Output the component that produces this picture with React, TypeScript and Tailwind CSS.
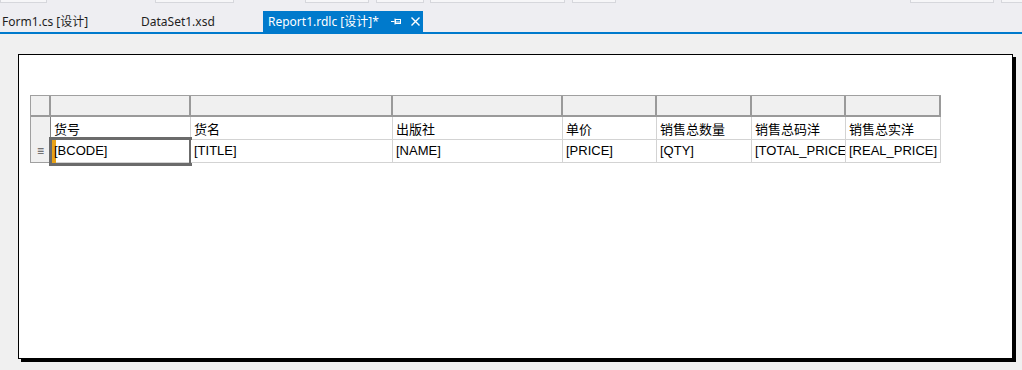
import React from "react";

const cols = [
  { w: 140, head: "货号", field: "[BCODE]" },
  { w: 202, head: "货名", field: "[TITLE]" },
  { w: 170, head: "出版社", field: "[NAME]" },
  { w: 94, head: "单价", field: "[PRICE]" },
  { w: 95, head: "销售总数量", field: "[QTY]" },
  { w: 94, head: "销售总码洋", field: "[TOTAL_PRICE]" },
  { w: 95, head: "销售总实洋", field: "[REAL_PRICE]" },
];

const toolbarBoxes = [
  { ml: 0, w: 47 },
  { ml: 108, w: 79 },
  { ml: 71, w: 64 },
  { ml: 7, w: 48 },
  { ml: 6, w: 135 },
  { ml: 7, w: 44 },
  { ml: 294, w: 84 },
  { ml: 7, w: 40 },
];

function PinIcon() {
  return (
    <svg width="10" height="7" viewBox="0 0 10 7" className="block">
      <path d="M0 3.5H3.5" stroke="white" strokeWidth="1" />
      <rect x="3.5" y="0.5" width="1" height="6" fill="white" />
      <rect x="4.5" y="1.5" width="5" height="4" fill="none" stroke="white" strokeWidth="1" />
      <rect x="4.5" y="3.5" width="5" height="1" fill="white" />
    </svg>
  );
}

function CloseIcon() {
  return (
    <svg width="9" height="9" viewBox="0 0 9 9" className="block">
      <path d="M0.5 0.5L8.5 8.5M8.5 0.5L0.5 8.5" stroke="white" strokeWidth="1.4" />
    </svg>
  );
}

function TabBar() {
  const font = { fontFamily: '"Noto Sans", "Noto Sans CJK SC", sans-serif' };
  return (
    <div className="bg-[#eeeef2]">
      <div className="flex h-[3px]">
        {toolbarBoxes.map((b, i) => (
          <div
            key={i}
            className="shrink-0 bg-[#f6f6f8] border-x border-b border-[#d6d7dc]"
            style={{ marginLeft: b.ml, width: b.w }}
          />
        ))}
      </div>
      <div className="flex items-end h-[29px] text-[12px] leading-none" style={font}>
        <div className="w-[135px] h-[21px] flex items-center pl-[2px] text-[#1e1e1e]">
          Form1.cs [设计]
        </div>
        <div className="w-[128px] h-[21px] flex items-center pl-[6px] text-[#1e1e1e]">
          DataSet1.xsd
        </div>
        <div className="w-[160px] h-[21px] flex items-center pl-[5px] bg-[#007acc] text-white">
          <span>Report1.rdlc [设计]*</span>
          <span className="ml-[12px]">
            <PinIcon />
          </span>
          <span className="ml-[10px]">
            <CloseIcon />
          </span>
        </div>
      </div>
      <div className="h-[2px] bg-[#007acc]" />
    </div>
  );
}

function Table() {
  const font = { fontFamily: '"Liberation Sans", "Noto Sans CJK SC", sans-serif' };
  return (
    <div className="ml-[11px] mt-[40px] w-fit text-[13px] leading-[15px] text-black" style={font}>
      {/* column header strip */}
      <div className="flex border-t border-l border-[#a0a0a0]">
        <div className="w-[20px] h-[21px] bg-[#f0f0f0] border-r-2 border-b-2 border-[#9a9a9a]" />
        {cols.map((c, i) => (
          <div
            key={i}
            className="h-[21px] bg-[#f0f0f0] border-r-2 border-b-2 border-[#9a9a9a]"
            style={{ width: c.w }}
          />
        ))}
      </div>
      {/* header row */}
      <div className="flex border-l border-[#a0a0a0]">
        <div className="w-[20px] h-[23px] bg-[#f0f0f0] border-r border-[#808080]" />
        {cols.map((c, i) => (
          <div
            key={i}
            className="h-[23px] bg-white border-r border-b border-[#d3d3d3] pl-[3px] pt-[5px] whitespace-nowrap overflow-hidden"
            style={{ width: c.w }}
          >
            {c.head}
          </div>
        ))}
      </div>
      {/* detail row */}
      <div className="flex border-l border-[#a0a0a0]">
        <div className="w-[20px] h-[23px] bg-[#f0f0f0] border-r border-b border-r-[#808080] border-b-[#a0a0a0] flex items-center justify-center text-[#555] text-[12px]">
          ≡
        </div>
        {cols.map((c, i) => (
          <div
            key={i}
            className="relative h-[23px] bg-white border-r border-b border-[#d3d3d3] pl-[3px] pt-[3px] whitespace-nowrap"
            style={{ width: c.w }}
          >
            {i === 0 && (
              <>
                <div className="absolute left-[-2px] right-[-2px] top-[-3px] bottom-[-4px] border-[3px] border-[#6b6b6b]" />
                <div className="absolute left-[1px] top-0 w-[4px] h-[23px] bg-[#e8a317]" />
              </>
            )}
            <div className="relative overflow-hidden h-[17px]">{c.field}</div>
          </div>
        ))}
      </div>
    </div>
  );
}

export default function App() {
  return (
    <div className="w-[1022px] h-[370px] overflow-hidden bg-[#f0f0f0]">
      <TabBar />
      <div className="pt-[20px] pl-[18px]">
        <div className="w-[995px] h-[305px] bg-white border border-black shadow-[3px_3px_0_#000] overflow-hidden">
          <Table />
        </div>
      </div>
    </div>
  );
}
